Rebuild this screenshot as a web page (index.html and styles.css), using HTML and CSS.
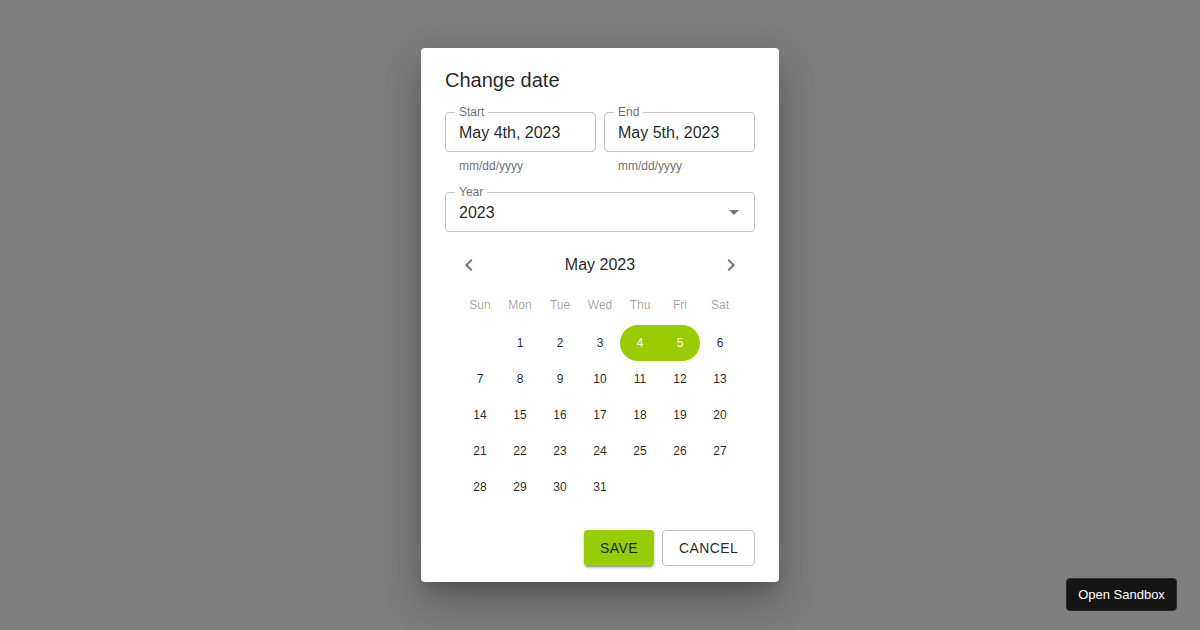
FILE: index.html
```html
<!DOCTYPE html>
<html lang="en">
<head>
<meta charset="utf-8">
<title>Change date</title>
<link rel="stylesheet" href="styles.css">
</head>
<body>
<div class="backdrop">
  <div class="dialog" role="dialog">
    <h2 class="title">Change date</h2>
    <div class="content">
      <div class="range">
        <div class="field-wrap">
          <div class="field">
            <span class="label">Start</span>
            <span class="value">May 4th, 2023</span>
          </div>
          <div class="helper">mm/dd/yyyy</div>
        </div>
        <div class="field-wrap">
          <div class="field">
            <span class="label">End</span>
            <span class="value">May 5th, 2023</span>
          </div>
          <div class="helper">mm/dd/yyyy</div>
        </div>
      </div>
      <div class="field select">
        <span class="label">Year</span>
        <span class="value">2023</span>
        <svg class="caret" viewBox="0 0 24 24" width="24" height="24"><path d="M7 10l5 5 5-5z"/></svg>
      </div>
      <div class="calendar">
        <div class="cal-head">
          <svg class="chev" viewBox="0 0 24 24" width="24" height="24"><path d="M15.41 7.41 14 6l-6 6 6 6 1.41-1.41L10.83 12z"/></svg>
          <div class="month">May 2023</div>
          <svg class="chev" viewBox="0 0 24 24" width="24" height="24"><path d="M10 6 8.59 7.41 13.17 12l-4.58 4.59L10 18l6-6z"/></svg>
        </div>
        <div class="weekdays">
          <span>Sun</span><span>Mon</span><span>Tue</span><span>Wed</span><span>Thu</span><span>Fri</span><span>Sat</span>
        </div>
        <div class="days">
          <span></span><span>1</span><span>2</span><span>3</span><span class="sel start">4</span><span class="sel end">5</span><span>6</span>
          <span>7</span><span>8</span><span>9</span><span>10</span><span>11</span><span>12</span><span>13</span>
          <span>14</span><span>15</span><span>16</span><span>17</span><span>18</span><span>19</span><span>20</span>
          <span>21</span><span>22</span><span>23</span><span>24</span><span>25</span><span>26</span><span>27</span>
          <span>28</span><span>29</span><span>30</span><span>31</span><span></span><span></span><span></span>
        </div>
      </div>
    </div>
    <div class="actions">
      <button class="btn primary">SAVE</button>
      <button class="btn outlined">CANCEL</button>
    </div>
  </div>
</div>
<button class="sandbox">Open Sandbox</button>
</body>
</html>
```

FILE: styles.css
```css
* { box-sizing: border-box; }
html, body {
  margin: 0;
  padding: 0;
  width: 1200px;
  height: 630px;
  overflow: hidden;
  font-family: "Liberation Sans", Arial, Helvetica, sans-serif;
}
.backdrop {
  width: 1200px;
  height: 630px;
  background: #7f7f7f;
  display: flex;
  align-items: center;
  justify-content: center;
}
.dialog {
  width: 358px;
  height: 534px;
  background: #fff;
  border-radius: 4px;
  box-shadow: 0 11px 15px -7px rgba(0,0,0,0.2), 0 24px 38px 3px rgba(0,0,0,0.14), 0 9px 46px 8px rgba(0,0,0,0.12);
  display: flex;
  flex-direction: column;
}
.title {
  margin: 0;
  padding: 16px 24px;
  font-size: 20px;
  font-weight: 400;
  line-height: 32px;
  color: rgba(0,0,0,0.87);
}
.content {
  padding: 0 24px;
  display: flex;
  flex-direction: column;
}
.range {
  display: flex;
  gap: 8px;
}
.field-wrap {
  flex: 1;
  display: flex;
  flex-direction: column;
}
.field {
  position: relative;
  height: 40px;
  border: 1px solid #c4c4c4;
  border-radius: 4px;
  display: flex;
  align-items: center;
  padding: 1px 13px 0;
}
.label {
  position: absolute;
  left: 9px;
  top: -8px;
  padding: 0 4px;
  background: #fff;
  font-size: 12px;
  line-height: 14px;
  color: rgba(0,0,0,0.6);
}
.value {
  font-size: 16px;
  color: rgba(0,0,0,0.87);
  line-height: 20px;
}
.helper {
  margin: 4px 14px 0;
  font-size: 12px;
  line-height: 20px;
  color: rgba(0,0,0,0.6);
}
.select {
  margin-top: 16px;
}
.caret {
  position: absolute;
  right: 8px;
  top: 7px;
  fill: rgba(0,0,0,0.54);
}
.calendar {
  margin-top: 17px;
  display: flex;
  flex-direction: column;
}
.cal-head {
  height: 32px;
  padding: 0 12px;
  display: grid;
  grid-template-columns: 24px 1fr 24px;
  align-items: center;
}
.chev {
  fill: rgba(0,0,0,0.54);
}
.month {
  text-align: center;
  font-size: 16px;
  color: rgba(0,0,0,0.87);
}
.weekdays, .days {
  width: 280px;
  align-self: center;
  display: grid;
  grid-template-columns: repeat(7, 40px);
}
.weekdays {
  margin-top: 12px;
  height: 24px;
  align-items: center;
}
.weekdays span {
  text-align: center;
  font-size: 12px;
  color: rgba(0,0,0,0.38);
}
.days {
  margin-top: 8px;
  grid-auto-rows: 36px;
}
.days span {
  display: flex;
  align-items: center;
  justify-content: center;
  font-size: 12px;
  color: rgba(0,0,0,0.87);
}
.days .sel {
  background: #99cc00;
  color: #fff;
}
.days .start {
  border-radius: 18px 0 0 18px;
}
.days .end {
  border-radius: 0 18px 18px 0;
}
.actions {
  margin-top: auto;
  padding: 0 24px 16px;
  display: flex;
  justify-content: flex-end;
  gap: 8px;
}
.btn {
  height: 36px;
  border-radius: 4px;
  font-family: "Liberation Sans", Arial, Helvetica, sans-serif;
  font-size: 14px;
  font-weight: 400;
  letter-spacing: 0.4px;
  color: rgba(0,0,0,0.87);
  cursor: pointer;
  padding: 0;
}
.primary {
  width: 70px;
  background: #99cc00;
  border: none;
  box-shadow: 0 3px 1px -2px rgba(0,0,0,0.2), 0 2px 2px 0 rgba(0,0,0,0.14), 0 1px 5px 0 rgba(0,0,0,0.12);
}
.outlined {
  width: 93px;
  background: #fff;
  border: 1px solid #c4c4c4;
}
.sandbox {
  position: fixed;
  right: 23px;
  bottom: 19px;
  width: 111px;
  height: 33px;
  background: #151515;
  color: #fff;
  border: 1px solid #2a2a2a;
  border-radius: 4px;
  font-family: "Liberation Sans", Arial, Helvetica, sans-serif;
  font-size: 13px;
  padding: 0;
}
```
